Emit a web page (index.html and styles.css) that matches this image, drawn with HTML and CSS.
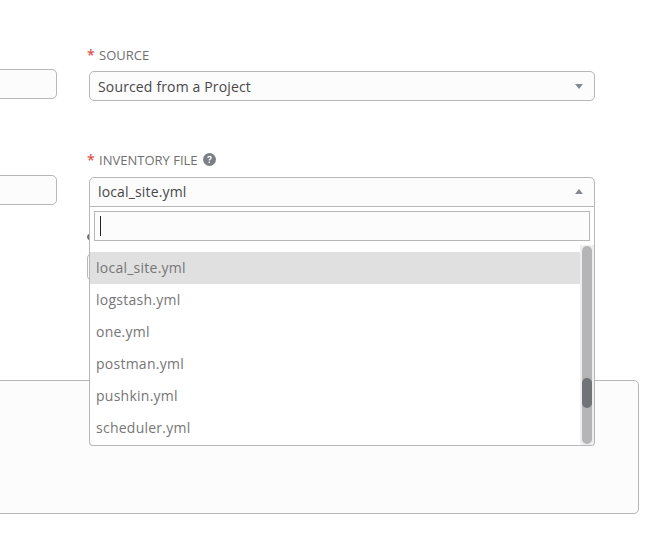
FILE: index.html
```html
<!DOCTYPE html>
<html lang="en">
<head>
  <meta charset="UTF-8">
  <title>Inventory Source</title>
  <link rel="stylesheet" href="styles.css">
</head>
<body>
  <div class="form">
    <div class="form-row form-row-source">
      <div class="stub-input"></div>
      <div class="field">
        <label class="field-label"><span class="required">*</span> SOURCE</label>
        <div class="select">
          <span>Sourced from a Project</span>
          <span class="arrow-down"></span>
        </div>
      </div>
    </div>

    <div class="form-row form-row-inventory">
      <div class="stub-input"></div>
      <div class="field">
        <label class="field-label">
          <span class="required">*</span> INVENTORY FILE
          <svg class="help-icon" viewBox="0 0 24 24" width="13" height="13">
            <circle cx="12" cy="12" r="12" fill="#7a7f88"/>
            <path d="M8 9.2c0-2.4 1.8-4 4.2-4 2.300 0 4 1.400 4 3.500 0 1.700-1 2.500-2.200 3.300-.9.600-1.100 1-1.100 2h-2.500c0-1.800.5-2.700 1.800-3.600.9-.6 1.400-1 1.400-1.700 0-.8-.6-1.300-1.700-1.300-1.200 0-1.700.7-1.800 1.800z" fill="#fff"/>
            <rect x="10.400" y="15.800" width="2.600" height="2.800" fill="#fff"/>
          </svg>
        </label>
        <div class="select select-open">
          <span>local_site.yml</span>
          <span class="arrow-up"></span>
        </div>

        <div class="behind-label"></div>
        <div class="behind-input"></div>

        <div class="dropdown">
          <div class="search-wrap">
            <div class="search"><span class="caret"></span></div>
          </div>
          <ul class="results">
            <li class="active">local_site.yml</li>
            <li>logstash.yml</li>
            <li>one.yml</li>
            <li>postman.yml</li>
            <li>pushkin.yml</li>
            <li>scheduler.yml</li>
          </ul>
          <div class="scrollbar"><div class="thumb"></div></div>
        </div>
      </div>
    </div>

    <div class="textarea"></div>
  </div>
</body>
</html>
```

FILE: styles.css
```css
html, body {
  margin: 0;
  height: 100%;
  overflow: hidden;
  background: #fff;
}

body {
  font-family: "Open Sans", sans-serif;
  color: #484848;
}

.form {
  padding-top: 45px;
}

.form-row {
  display: grid;
  grid-template-columns: 57px 506px;
  column-gap: 32px;
  align-items: start;
}

.form-row-inventory {
  margin-top: 50px;
}

.stub-input {
  height: 28px;
  margin-top: 24px;
  margin-left: -10px;
  background: #fcfcfc;
  border: 1px solid #b7b7b7;
  border-radius: 5px;
}

.field {
  position: relative;
}

.field-label {
  display: block;
  height: 26px;
  line-height: 19px;
  margin-left: -2px;
  font-size: 13px;
  color: #707070;
}

.form-row-inventory .field-label {
  line-height: 18px;
}

.required {
  color: #d9534f;
  font-size: 14px;
  font-weight: 600;
  margin-right: 1px;
}

.help-icon {
  vertical-align: -1px;
  margin-left: 2px;
}

.select {
  display: flex;
  justify-content: space-between;
  align-items: center;
  box-sizing: border-box;
  height: 30px;
  padding: 0 11px 0 8px;
  font-size: 14px;
  letter-spacing: 0.15px;
  background: #fcfcfc;
  border: 1px solid #b7b7b7;
  border-radius: 5px;
}

.select-open {
  padding-bottom: 2px;
  border-radius: 5px 5px 0 0;
}

.arrow-down {
  width: 0;
  height: 0;
  border-left: 4px solid transparent;
  border-right: 4px solid transparent;
  border-top: 5px solid #848992;
}

.arrow-up {
  width: 0;
  height: 0;
  border-left: 4px solid transparent;
  border-right: 4px solid transparent;
  border-bottom: 5px solid #848992;
}

.behind-label {
  width: 10px;
  height: 8px;
  margin: 26px 0 0 -2px;
  background: #707070;
  border-radius: 50%;
}

.behind-input {
  height: 28px;
  margin: 12px 0 0 -2px;
  box-sizing: border-box;
  background: #fcfcfc;
  border: 1px solid #b7b7b7;
  border-radius: 5px;
}

.dropdown {
  position: absolute;
  top: 56px;
  left: 0;
  right: 0;
  height: 239px;
  box-sizing: border-box;
  background: #fff;
  border: 1px solid #b7b7b7;
  border-top: 0;
  border-radius: 0 0 4px 4px;
}

.search-wrap {
  padding: 4px 4px 0;
}

.search {
  display: flex;
  align-items: center;
  box-sizing: border-box;
  height: 30px;
  padding-left: 5px;
  background: #fcfcfc;
  border: 1px solid #b7b7b7;
}

.caret {
  width: 1px;
  height: 20px;
  background: #222;
}

.results {
  list-style: none;
  margin: 11px 14px 0 0;
  padding: 0;
  font-size: 14px;
  letter-spacing: 0.25px;
  color: #767676;
}

.results li {
  height: 32px;
  line-height: 32px;
  padding-left: 6px;
}

.results li.active {
  background: #e0e0e0;
}

.scrollbar {
  position: absolute;
  top: 38px;
  right: 0;
  bottom: 0;
  width: 14px;
  box-sizing: border-box;
  padding: 1px 2px;
  background: #eeeef0;
  border-radius: 0 0 3px 3px;
}

.scrollbar::before {
  content: "";
  display: block;
  height: 100%;
  background: #b5b5b7;
  border-radius: 5px;
}

.thumb {
  position: absolute;
  top: 133px;
  left: 2px;
  width: 10px;
  height: 30px;
  background: #707378;
  border-radius: 5px;
}

.textarea {
  box-sizing: border-box;
  width: 649px;
  height: 134px;
  margin: 99px 0 0 -10px;
  background: #fcfcfc;
  border: 1px solid #b7b7b7;
  border-radius: 5px;
}
```
